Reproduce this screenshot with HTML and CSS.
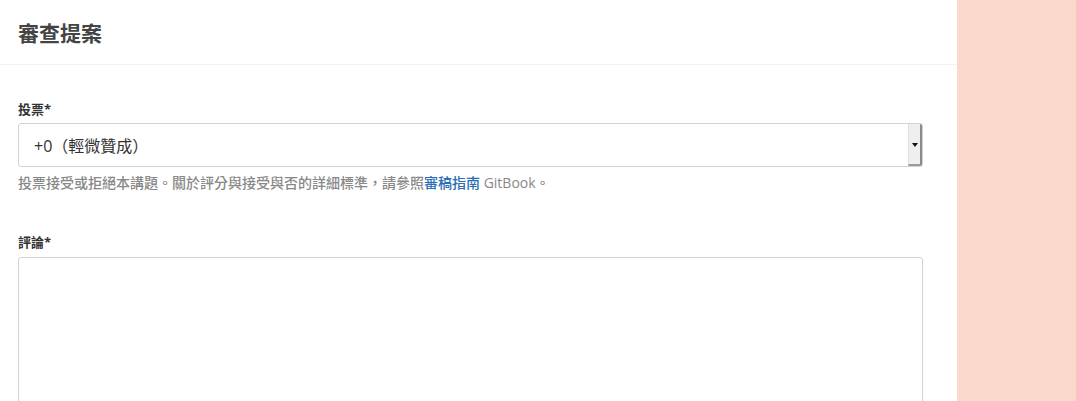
FILE: index.html
```html
<!DOCTYPE html>
<html lang="zh-Hant">
<head>
<meta charset="utf-8">
<title>審查提案</title>
<link rel="stylesheet" href="styles.css">
</head>
<body>
<div class="page">
  <main class="main">
    <header class="header">
      <h1 class="title">審查提案</h1>
    </header>
    <form class="form">
      <div class="field field-vote">
        <label class="label">投票*</label>
        <div class="select">
          <span class="select-value">+0（輕微贊成）</span>
          <span class="select-btn"><span class="caret"></span></span>
        </div>
        <p class="help">投票接受或拒絕本講題。關於評分與接受與否的詳細標準，請參照<a class="link" href="#">審稿指南</a> GitBook。</p>
      </div>
      <div class="field field-comment">
        <label class="label">評論*</label>
        <div class="textarea"></div>
      </div>
    </form>
  </main>
  <aside class="side"></aside>
</div>
</body>
</html>
```

FILE: styles.css
```css
html, body {
  margin: 0;
  padding: 0;
  height: 100%;
  overflow: hidden;
}
body {
  font-family: "Open Sans", "Noto Sans CJK TC", sans-serif;
  color: #333;
  background: #fff;
}
.page {
  display: flex;
  height: 401px;
}
.main {
  width: 957px;
  flex: none;
  background: #fff;
}
.side {
  flex: 1;
  background: #f9d9ca;
}
.header {
  height: 64px;
  border-bottom: 1px solid #f2f2f2;
  display: flex;
  align-items: center;
  padding-left: 18px;
}
.title {
  margin: 0;
  font-size: 21px;
  font-weight: 700;
  color: #444;
  line-height: 1;
  padding-top: 3px;
}
.form {
  padding: 35px 34px 0 18px;
}
.label {
  display: block;
  font-size: 13px;
  font-weight: 700;
  line-height: 18px;
  color: #333;
  margin-bottom: 5px;
}
.select {
  height: 44px;
  border: 1px solid #d2d2d2;
  border-radius: 3px;
  box-sizing: border-box;
  display: flex;
  align-items: center;
  justify-content: space-between;
  padding-left: 15px;
}
.select-value {
  font-size: 16px;
  color: #333;
}
.select-btn {
  width: 14px;
  height: 42px;
  background: #efefef;
  border-left: 1px solid #ddd;
  border-right: 2px solid #8a8a8a;
  border-bottom: 2px solid #9a9a9a;
  box-sizing: border-box;
  display: flex;
  align-items: center;
  justify-content: center;
  border-radius: 0 2px 2px 0;
}
.caret {
  width: 0;
  height: 0;
  border-left: 3px solid transparent;
  border-right: 3px solid transparent;
  border-top: 4px solid #111;
  margin-top: 2px;
}
.help {
  margin: 6px 0 0;
  font-size: 14px;
  font-weight: 500;
  line-height: 20px;
  color: #888;
}
.link {
  color: #2a6db5;
  text-decoration: none;
}
.field-comment {
  margin-top: 40px;
}
.field-comment .label {
  margin-bottom: 6px;
}
.textarea {
  height: 200px;
  border: 1px solid #d2d2d2;
  border-radius: 3px;
  box-sizing: border-box;
}
```
